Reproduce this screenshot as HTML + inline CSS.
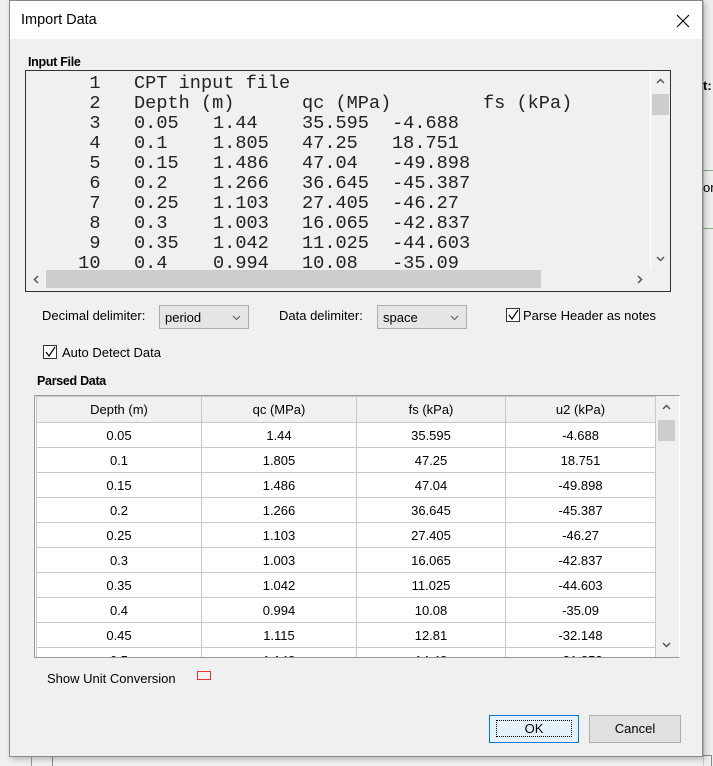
<!DOCTYPE html>
<html><head><style>
*{margin:0;padding:0;box-sizing:border-box}
body{width:713px;height:766px;background:#f4f4f4;position:relative;overflow:hidden;font-family:"Liberation Sans",Tahoma,sans-serif;font-size:13px;color:#000}
.a{position:absolute}
.dlg{left:9px;top:0;width:694px;height:757px;background:#f0f0f0;border:1px solid #888;box-shadow:2px 2px 6px rgba(0,0,0,.25)}
.title{left:0;top:0;width:692px;height:38px;background:#fff}
.mono{font-family:"Liberation Mono","Courier New",monospace;font-size:18.6px;line-height:20px;white-space:pre;color:#222}
.lbl{font-weight:bold;font-size:12.5px;letter-spacing:-0.3px}
.combo{height:24px;border:1px solid #adadad;background:#e5e5e5;font-size:13px;padding:4px 5px}
.chk{width:14px;height:14px;border:1px solid #333;background:#fff}
table{border-collapse:collapse;font-size:13px}
td{border:1px solid #c8c8c8;height:25px;text-align:center;background:#fff;padding:0}
th{border:1px solid #c8c8c8;height:26px;font-weight:normal;background:#f0f0f0}
.btn{height:28px;border:1px solid #adadad;background:#e1e1e1;text-align:center;line-height:26px;font-size:13px}
</style></head><body>
<div class="a" style="left:0;top:0;width:713px;height:766px;background:#f0f0f0"></div>
<div class="a" style="left:703px;top:0;width:10px;height:766px;background:#eee;border-left:1px solid #ccc"></div>
<div class="a" style="left:703px;top:78px;font-size:13px;font-weight:bold">t:</div>
<div class="a" style="left:703px;top:180px;font-size:13px">or</div>
<div class="a" style="left:703px;top:170px;width:10px;height:1px;background:#8a8"></div>
<div class="a" style="left:703px;top:228px;width:10px;height:1px;background:#8a8"></div>
<div class="a" style="left:31px;top:755px;width:1px;height:11px;background:#999"></div>
<div class="a" style="left:52px;top:755px;width:660px;height:11px;border:1px solid #888;border-bottom:none"></div>
<div class="a dlg">
 <div class="a title"></div>
 <div class="a" style="left:11px;top:11px;font-size:14.5px">Import Data</div>
 <svg class="a" style="left:666px;top:13px" width="14" height="14"><path d="M1 1L13 13M13 1L1 13" stroke="#000" stroke-width="1.1"/></svg>
 <div class="a lbl" style="left:18px;top:54px">Input File</div>
 <div class="a" style="left:15px;top:69px;width:646px;height:222px;border:1px solid #333;background:#f0f0f0;overflow:hidden">
  <div class="a mono" style="left:0;top:3px;width:625px;height:196px;overflow:hidden">
<span class="a" style="left:41px;top:0">  1</span><span class="a" style="left:108px;top:0">CPT input file</span>
<span class="a" style="left:41px;top:20px">  2</span><span class="a" style="left:108px;top:20px">Depth (m)</span><span class="a" style="left:276px;top:20px">qc (MPa)</span><span class="a" style="left:457px;top:20px">fs (kPa)</span>
<span class="a" style="left:41px;top:40px">  3</span><span class="a" style="left:108px;top:40px">0.05</span><span class="a" style="left:187px;top:40px">1.44</span><span class="a" style="left:276px;top:40px">35.595</span><span class="a" style="left:366px;top:40px">-4.688</span>
<span class="a" style="left:41px;top:60px">  4</span><span class="a" style="left:108px;top:60px">0.1</span><span class="a" style="left:187px;top:60px">1.805</span><span class="a" style="left:276px;top:60px">47.25</span><span class="a" style="left:366px;top:60px">18.751</span>
<span class="a" style="left:41px;top:80px">  5</span><span class="a" style="left:108px;top:80px">0.15</span><span class="a" style="left:187px;top:80px">1.486</span><span class="a" style="left:276px;top:80px">47.04</span><span class="a" style="left:366px;top:80px">-49.898</span>
<span class="a" style="left:41px;top:100px">  6</span><span class="a" style="left:108px;top:100px">0.2</span><span class="a" style="left:187px;top:100px">1.266</span><span class="a" style="left:276px;top:100px">36.645</span><span class="a" style="left:366px;top:100px">-45.387</span>
<span class="a" style="left:41px;top:120px">  7</span><span class="a" style="left:108px;top:120px">0.25</span><span class="a" style="left:187px;top:120px">1.103</span><span class="a" style="left:276px;top:120px">27.405</span><span class="a" style="left:366px;top:120px">-46.27</span>
<span class="a" style="left:41px;top:140px">  8</span><span class="a" style="left:108px;top:140px">0.3</span><span class="a" style="left:187px;top:140px">1.003</span><span class="a" style="left:276px;top:140px">16.065</span><span class="a" style="left:366px;top:140px">-42.837</span>
<span class="a" style="left:41px;top:160px">  9</span><span class="a" style="left:108px;top:160px">0.35</span><span class="a" style="left:187px;top:160px">1.042</span><span class="a" style="left:276px;top:160px">11.025</span><span class="a" style="left:366px;top:160px">-44.603</span>
<span class="a" style="left:41px;top:180px"> 10</span><span class="a" style="left:108px;top:180px">0.4</span><span class="a" style="left:187px;top:180px">0.994</span><span class="a" style="left:276px;top:180px">10.08</span><span class="a" style="left:366px;top:180px">-35.09</span>
  </div>
  <div class="a" style="left:624px;top:0;width:20px;height:198px;background:#f0f0f0;border-left:1px solid #fff"></div>
  <div class="a" style="left:626px;top:23px;width:17px;height:21px;background:#cdcdcd"></div>
  <svg class="a" style="left:630px;top:7px" width="9" height="6"><path d="M1 5L4.5 1.5L8 5" stroke="#555" fill="none" stroke-width="1.5"/></svg>
  <svg class="a" style="left:630px;top:185px" width="9" height="6"><path d="M1 1L4.5 4.5L8 1" stroke="#555" fill="none" stroke-width="1.5"/></svg>
  <div class="a" style="left:0;top:198px;width:644px;height:22px;background:#f0f0f0"></div>
  <div class="a" style="left:20px;top:199px;width:495px;height:18px;background:#cdcdcd"></div>
  <svg class="a" style="left:7px;top:204px" width="6" height="9"><path d="M5 1L1.5 4.5L5 8" stroke="#555" fill="none" stroke-width="1.5"/></svg>
  <svg class="a" style="left:611px;top:204px" width="6" height="9"><path d="M1 1L4.5 4.5L1 8" stroke="#555" fill="none" stroke-width="1.5"/></svg>
 </div>
 <div class="a" style="left:32px;top:307px">Decimal delimiter:</div>
 <div class="a combo" style="left:149px;top:304px;width:90px">period<svg style="position:absolute;right:7px;top:9px" width="9" height="6"><path d="M1 1L4.5 4.5L8 1" stroke="#555" fill="none"/></svg></div>
 <div class="a" style="left:269px;top:307px">Data delimiter:</div>
 <div class="a combo" style="left:367px;top:304px;width:90px">space<svg style="position:absolute;right:7px;top:9px" width="9" height="6"><path d="M1 1L4.5 4.5L8 1" stroke="#555" fill="none"/></svg></div>
 <div class="a chk" style="left:496px;top:307px"><svg width="12" height="12" style="position:absolute;left:0;top:0"><path d="M2 6L5 10L11 1" stroke="#000" fill="none" stroke-width="1.2"/></svg></div>
 <div class="a" style="left:513px;top:307px">Parse Header as notes</div>
 <div class="a chk" style="left:33px;top:344px"><svg width="12" height="12" style="position:absolute;left:0;top:0"><path d="M2 6L5 10L11 1" stroke="#000" fill="none" stroke-width="1.2"/></svg></div>
 <div class="a" style="left:52px;top:344px">Auto Detect Data</div>
 <div class="a lbl" style="left:27px;top:373px">Parsed Data</div>
 <div class="a" style="left:24px;top:394px;width:646px;height:263px;border:1px solid #999;border-right:1px solid #fff;background:#fff;overflow:hidden">
  <table class="a" style="left:1px;top:0;width:620px">
   <tr><th style="width:165px">Depth (m)</th><th style="width:155px">qc (MPa)</th><th style="width:149px">fs (kPa)</th><th>u2 (kPa)</th></tr>
   <tr><td>0.05</td><td>1.44</td><td>35.595</td><td>-4.688</td></tr>
   <tr><td>0.1</td><td>1.805</td><td>47.25</td><td>18.751</td></tr>
   <tr><td>0.15</td><td>1.486</td><td>47.04</td><td>-49.898</td></tr>
   <tr><td>0.2</td><td>1.266</td><td>36.645</td><td>-45.387</td></tr>
   <tr><td>0.25</td><td>1.103</td><td>27.405</td><td>-46.27</td></tr>
   <tr><td>0.3</td><td>1.003</td><td>16.065</td><td>-42.837</td></tr>
   <tr><td>0.35</td><td>1.042</td><td>11.025</td><td>-44.603</td></tr>
   <tr><td>0.4</td><td>0.994</td><td>10.08</td><td>-35.09</td></tr>
   <tr><td>0.45</td><td>1.115</td><td>12.81</td><td>-32.148</td></tr>
   <tr><td>0.5</td><td>1.148</td><td>14.48</td><td>-31.852</td></tr>
  </table>
  <div class="a" style="left:621px;top:0;width:24px;height:261px;background:#f0f0f0"></div>
  <div class="a" style="left:623px;top:24px;width:17px;height:21px;background:#cdcdcd"></div>
  <svg class="a" style="left:627px;top:8px" width="9" height="6"><path d="M1 5L4.5 1.5L8 5" stroke="#555" fill="none" stroke-width="1.5"/></svg>
  <svg class="a" style="left:627px;top:246px" width="9" height="6"><path d="M1 1L4.5 4.5L8 1" stroke="#555" fill="none" stroke-width="1.5"/></svg>
 </div>
 <div class="a" style="left:37px;top:670px">Show Unit Conversion</div>
 <div class="a" style="left:187px;top:670px;width:14px;height:9px;border:1.5px solid #e33;border-left-width:1px"></div>
 <div class="a btn" style="left:479px;top:714px;width:90px;border:1px solid #0078d7;background:#e5f1fb"><span style="border:1px dotted #000;padding:0 28px">OK</span></div>
 <div class="a btn" style="left:579px;top:714px;width:92px">Cancel</div>
</div>
</body></html>
